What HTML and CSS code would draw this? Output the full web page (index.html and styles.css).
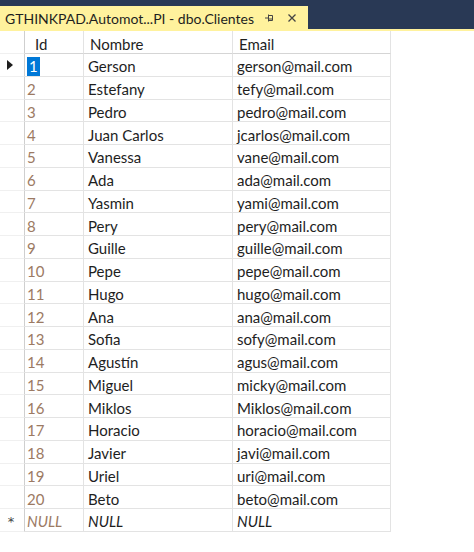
FILE: index.html
```html
<!DOCTYPE html>
<html>
<head>
<meta charset="utf-8">
<link rel="stylesheet" href="styles.css">
</head>
<body>
<div class="topbar">
  <div class="tab">
    <span class="tab-title">GTHINKPAD.Automot...PI - dbo.Clientes</span>
    <svg class="pin" width="8" height="8" viewBox="0 0 8 8"><path d="M0 4H3M3.5 0.5V7.5M3.5 1.5H7.5V6.5H3.5M3.5 5H7.5" fill="none" stroke="#444" stroke-width="1"/></svg>
    <svg class="close" width="8" height="8" viewBox="0 0 8 8"><path d="M0.5 0.5L7.5 7.5M7.5 0.5L0.5 7.5" stroke="#444" stroke-width="1.3"/></svg>
  </div>
</div>
<div class="accent"></div>
<div class="grid">
  <div class="row head"><div class="rh"></div><div class="c id">Id</div><div class="c nm">Nombre</div><div class="c em">Email</div></div>
  <div class="row"><div class="rh"><span class="arrow"></span></div><div class="c id"><span class="sel">1</span></div><div class="c nm">Gerson</div><div class="c em">gerson@mail.com</div></div>
  <div class="row"><div class="rh"></div><div class="c id">2</div><div class="c nm">Estefany</div><div class="c em">tefy@mail.com</div></div>
  <div class="row"><div class="rh"></div><div class="c id">3</div><div class="c nm">Pedro</div><div class="c em">pedro@mail.com</div></div>
  <div class="row"><div class="rh"></div><div class="c id">4</div><div class="c nm">Juan Carlos</div><div class="c em">jcarlos@mail.com</div></div>
  <div class="row"><div class="rh"></div><div class="c id">5</div><div class="c nm">Vanessa</div><div class="c em">vane@mail.com</div></div>
  <div class="row"><div class="rh"></div><div class="c id">6</div><div class="c nm">Ada</div><div class="c em">ada@mail.com</div></div>
  <div class="row"><div class="rh"></div><div class="c id">7</div><div class="c nm">Yasmin</div><div class="c em">yami@mail.com</div></div>
  <div class="row"><div class="rh"></div><div class="c id">8</div><div class="c nm">Pery</div><div class="c em">pery@mail.com</div></div>
  <div class="row"><div class="rh"></div><div class="c id">9</div><div class="c nm">Guille</div><div class="c em">guille@mail.com</div></div>
  <div class="row"><div class="rh"></div><div class="c id">10</div><div class="c nm">Pepe</div><div class="c em">pepe@mail.com</div></div>
  <div class="row"><div class="rh"></div><div class="c id">11</div><div class="c nm">Hugo</div><div class="c em">hugo@mail.com</div></div>
  <div class="row"><div class="rh"></div><div class="c id">12</div><div class="c nm">Ana</div><div class="c em">ana@mail.com</div></div>
  <div class="row"><div class="rh"></div><div class="c id">13</div><div class="c nm">Sofia</div><div class="c em">sofy@mail.com</div></div>
  <div class="row"><div class="rh"></div><div class="c id">14</div><div class="c nm">Agustín</div><div class="c em">agus@mail.com</div></div>
  <div class="row"><div class="rh"></div><div class="c id">15</div><div class="c nm">Miguel</div><div class="c em">micky@mail.com</div></div>
  <div class="row"><div class="rh"></div><div class="c id">16</div><div class="c nm">Miklos</div><div class="c em">Miklos@mail.com</div></div>
  <div class="row"><div class="rh"></div><div class="c id">17</div><div class="c nm">Horacio</div><div class="c em">horacio@mail.com</div></div>
  <div class="row"><div class="rh"></div><div class="c id">18</div><div class="c nm">Javier</div><div class="c em">javi@mail.com</div></div>
  <div class="row"><div class="rh"></div><div class="c id">19</div><div class="c nm">Uriel</div><div class="c em">uri@mail.com</div></div>
  <div class="row"><div class="rh"></div><div class="c id">20</div><div class="c nm">Beto</div><div class="c em">beto@mail.com</div></div>
  <div class="row null"><div class="rh star">*</div><div class="c id">NULL</div><div class="c nm">NULL</div><div class="c em">NULL</div></div>
</div>
</body>
</html>
```
FILE: styles.css
```css
html, body {
  margin: 0;
  padding: 0;
  background: #ffffff;
  font-family: "Lato", "Noto Sans", sans-serif;
}
.topbar {
  height: 29px;
  background: #293955;
  display: flex;
  align-items: flex-end;
}
.tab {
  width: 308px;
  height: 23px;
  background: #fff29d;
  display: flex;
  align-items: center;
  box-sizing: border-box;
  padding-left: 5px;
  padding-top: 1px;
}
.tab-title {
  font-size: 14px;
  color: #1e1e1e;
  white-space: nowrap;
}
.pin { flex: none; margin-left: auto; margin-right: 15px; }
.close { flex: none; margin-right: 12px; margin-top: -1px; }
.accent {
  height: 2px;
  background: #fff29d;
}
.grid {
  width: 391px;
  font-size: 15px;
  color: #1e1e1e;
}
.row {
  display: grid;
  grid-template-columns: 25px 59px 149px 158px;
  height: 22.76px;
  box-sizing: border-box;
}
.row > div {
  border-bottom: 1px solid #e3e3e3;
  border-right: 1px solid #e3e3e3;
  display: flex;
  align-items: center;
  box-sizing: border-box;
  white-space: nowrap;
  overflow: hidden;
  padding-top: 3px;
}
.row.head {
  height: 23px;
}
.row.head > div {
  border-bottom: 1px solid #d5d5d5;
}
.row.head .c {
  padding-left: 6px;
}
.rh {
  border-right-color: #cfcfcf !important;
  border-bottom-color: #f0f0f0 !important;
  justify-content: center;
  padding-top: 0 !important;
}
.c {
  padding-left: 4px;
}
.id {
  color: #9c7a63;
  padding-left: 2px;
}
.head .id { color: #1e1e1e; padding-left: 10px !important; }
.sel {
  background: #0078d7;
  color: #ffffff;
  padding: 0 2px;
  line-height: 19px;
}
.arrow {
  width: 0;
  height: 0;
  border-top: 5px solid transparent;
  border-bottom: 5px solid transparent;
  border-left: 6px solid #1e1e1e;
  margin-right: 4px;
}
.star {
  font-family: "DejaVu Sans", sans-serif;
  font-size: 13px;
  color: #444;
  padding-top: 4px !important;
  padding-right: 2px;
}
.null .c {
  font-style: italic;
}
.null .id {
  color: #9c7a63;
}
```
